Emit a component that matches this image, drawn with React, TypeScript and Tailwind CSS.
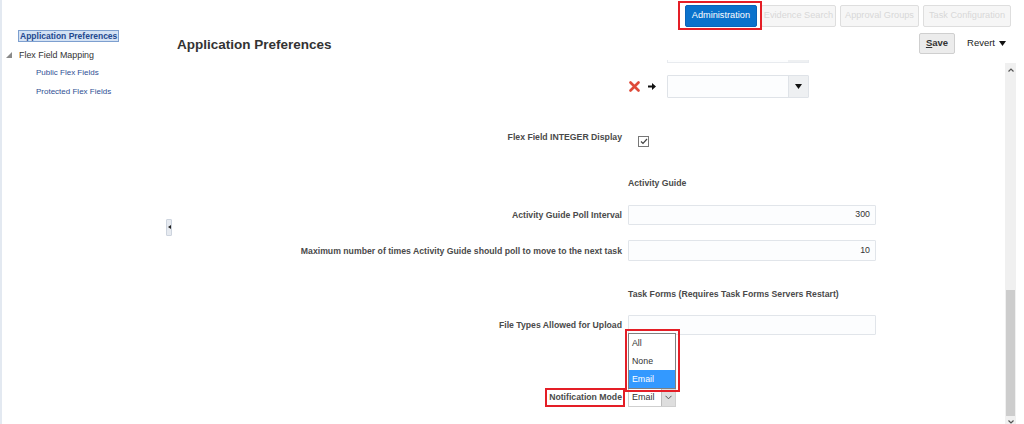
import React from "react";

const font = "font-['Liberation_Sans',Arial,sans-serif]";

function Label({ children }: { children: React.ReactNode }) {
  return (
    <div className="w-[450px] shrink-0 text-right text-[8.7px] font-bold text-[#4a4a4a] leading-[14px]">
      {children}
    </div>
  );
}

function TextInput({ value, w = "w-[248px]", h = "h-[20px]" }: { value?: string; w?: string; h?: string }) {
  return (
    <div
      className={`${w} ${h} border border-[#e1e5ea] bg-[#fcfdfe] rounded-[1px] flex items-center justify-end pr-[5px] text-[8.8px] text-[#333]`}
    >
      {value}
    </div>
  );
}

function DropInput() {
  return (
    <div className="w-[142px] h-[23px] border border-[#dfe3e8] bg-[#fcfdfe] rounded-[1px] flex">
      <div className="flex-1" />
      <div className="w-[20px] h-full bg-[#eef0f2] border-l border-[#dfe3e8] flex items-center justify-center">
        <svg width="7" height="5" viewBox="0 0 7 5">
          <path d="M0 0 H7 L3.5 5 Z" fill="#111" />
        </svg>
      </div>
    </div>
  );
}

export default function App() {
  return (
    <div className={`${font} w-[1024px] h-[424px] overflow-hidden bg-white flex flex-col border-l-2 border-[#e3e9f1] relative`}>
      {/* Tabs row */}
      <div className="h-[30px] shrink-0 flex items-start justify-end pr-[13px] pt-[5px] gap-[4px]">
        <div className="relative">
          <div className="h-[22px] px-[6px] flex items-center bg-[#0a72cc] border border-[#0a64b8] rounded-[2px] text-white text-[9.2px]">
            Administration
          </div>
          <span className="absolute -left-[7px] -right-[5px] -top-[4px] -bottom-[3px] border-2 border-[#e41e26] pointer-events-none" />
        </div>
        <div className="h-[22px] w-[75px] flex items-center justify-center bg-[#f6f6f6] border border-[#dedede] rounded-[2px] text-[#d8d8d8] text-[9.2px]">
          Evidence Search
        </div>
        <div className="h-[22px] w-[79px] flex items-center justify-center bg-[#f6f6f6] border border-[#dedede] rounded-[2px] text-[#d8d8d8] text-[9.2px]">
          Approval Groups
        </div>
        <div className="h-[22px] w-[88px] flex items-center justify-center bg-[#f6f6f6] border border-[#dedede] rounded-[2px] text-[#d8d8d8] text-[9.2px]">
          Task Configuration
        </div>
      </div>

      <div className="flex-1 flex min-h-0">
        {/* Left nav */}
        <div className="w-[161px] shrink-0 pl-[16px] flex flex-col items-start">
          <div className="h-[12px] leading-[10px] px-[1px] bg-[#d4e2f4] border border-[#7d9fcf] text-[8.5px] font-bold text-[#23488f]">
            Application Preferences
          </div>
          <div className="flex items-center mt-[7px] -ml-[12px] h-[12px] leading-[12px]">
            <svg width="6" height="6" viewBox="0 0 6 6" className="mr-[7px]">
              <path d="M6 0 V6 H0 Z" fill="#8a8a8a" />
            </svg>
            <span className="text-[8.9px] text-[#333]">Flex Field Mapping</span>
          </div>
          <div className="ml-[18px] mt-[6px] h-[12px] text-[8px] text-[#2f4f94] leading-[12px]">Public Flex Fields</div>
          <div className="ml-[18px] mt-[7px] h-[12px] text-[8px] text-[#2f4f94] leading-[12px]">Protected Flex Fields</div>
        </div>

        {/* Splitter */}
        <div className="w-[9px] shrink-0 flex items-center pl-[3px]">
          <div className="w-[6px] h-[17px] bg-[#e6eaf0] border border-[#cdd4de] rounded-[1px] flex items-center justify-center">
            <svg width="3" height="4" viewBox="0 0 3 4">
              <path d="M3 0 V4 L0 2 Z" fill="#222" />
            </svg>
          </div>
        </div>

        {/* Main */}
        <div className="flex-1 flex flex-col min-w-0">
          <div className="h-[30px] shrink-0 flex items-center pl-[5px] pr-[18px]">
            <div className="text-[13.5px] font-bold text-[#333]">Application Preferences</div>
            <div className="flex-1" />
            <div className="h-[21px] w-[36px] mt-[-3px] bg-[#ececec] border border-[#cfcfcf] rounded-[2px] flex items-center justify-center text-[9.5px] font-bold text-[#333]">
              <span className="underline">S</span>ave
            </div>
            <div className="ml-[12px] mt-[-3px] text-[9.5px] text-[#222] flex items-center gap-[4px]">
              Revert
              <svg width="7" height="5" viewBox="0 0 7 5">
                <path d="M0 0 H7 L3.5 5 Z" fill="#111" />
              </svg>
            </div>
          </div>

          <div className="flex-1 flex min-h-0 overflow-hidden">
            {/* Form */}
            <div className="w-[833px] shrink-0 flex flex-col">
              {/* partial row */}
              <div className="flex mt-[-17px]">
                <div className="w-[495px] shrink-0" />
                <div className="w-[142px] h-[20px] border border-[#e8ebef] bg-[#fcfdfe] flex">
                  <div className="flex-1" />
                  <div className="w-[20px] h-full bg-[#eef0f2]" />
                </div>
              </div>

              {/* X row */}
              <div className="flex items-center mt-[12px]">
                <div className="w-[456px] shrink-0" />
                <svg width="11" height="11" viewBox="0 0 11 11" className="ml-[1px]">
                  <path d="M1.5 1.5 L9.5 9.5 M9.5 1.5 L1.5 9.5" stroke="#df4b3a" strokeWidth="2.6" strokeLinecap="round" />
                </svg>
                <svg width="8" height="7" viewBox="0 0 8 7" className="ml-[8px]">
                  <path d="M0 2.5 H4 V0 L8 3.5 L4 7 V4.5 H0 Z" fill="#111" />
                </svg>
                <div className="ml-[11px]">
                  <DropInput />
                </div>
              </div>

              {/* checkbox row */}
              <div className="flex items-start gap-[6px] mt-[32px]">
                <Label>Flex Field INTEGER Display</Label>
                <div className="ml-[10px] mt-[6px] w-[11px] h-[11px] border border-[#777] bg-white flex items-center justify-center">
                  <svg width="8" height="7" viewBox="0 0 8 7">
                    <path d="M1 3.5 L3 5.5 L7 1" stroke="#444" strokeWidth="1.2" fill="none" />
                  </svg>
                </div>
              </div>

              {/* Activity Guide header */}
              <div className="flex gap-[6px] mt-[29px]">
                <div className="w-[450px] shrink-0" />
                <div className="text-[8.7px] font-bold text-[#4a4a4a] leading-[14px]">Activity Guide</div>
              </div>

              <div className="flex items-center gap-[6px] mt-[15px]">
                <Label>Activity Guide Poll Interval</Label>
                <TextInput value="300" />
              </div>

              <div className="flex items-center gap-[6px] mt-[15px]">
                <Label>Maximum number of times Activity Guide should poll to move to the next task</Label>
                <TextInput value="10" h="h-[21px]" />
              </div>

              <div className="flex gap-[6px] mt-[26px]">
                <div className="w-[450px] shrink-0" />
                <div className="text-[8.7px] font-bold text-[#4a4a4a] leading-[14px]">
                  Task Forms (Requires Task Forms Servers Restart)
                </div>
              </div>

              <div className="flex items-center gap-[6px] mt-[14px]">
                <Label>File Types Allowed for Upload</Label>
                <TextInput />
              </div>

              {/* Notification Mode */}
              <div className="flex items-stretch gap-[6px] mt-[53px] h-[19px]">
                <div className="w-[450px] shrink-0 flex justify-end">
                  <span className="relative h-full flex items-center text-[8.7px] font-bold text-[#4a4a4a]">
                    Notification Mode
                    <span className="absolute inset-y-0 -left-[4px] -right-[3px] border-2 border-[#e41e26]" />
                  </span>
                </div>
                <div className="relative w-[48px] h-full border border-[#cfcfcf] bg-white flex">
                  <div className="flex-1 flex items-center pl-[3px] text-[9px] text-[#333]">Email</div>
                  <div className="w-[14px] h-full bg-[#dedede] border-l border-[#bdbdbd] flex items-center justify-center">
                    <svg width="7" height="5" viewBox="0 0 7 5">
                      <path d="M0.5 0.8 L3.5 3.8 L6.5 0.8" stroke="#555" strokeWidth="1" fill="none" />
                    </svg>
                  </div>
                  {/* popup */}
                  <div className="absolute left-[-1px] bottom-full w-[48px] h-[56px] border border-[#808080] bg-white flex flex-col text-[8.8px] text-[#333]">
                    <div className="h-[18px] flex items-center pl-[3px] pt-[2px]">All</div>
                    <div className="h-[18px] flex items-center pl-[3px] pt-[2px]">None</div>
                    <div className="h-[18px] flex items-center pl-[3px] pt-[2px] bg-[#3399ff] text-white">Email</div>
                    <span className="absolute -left-[4px] -right-[5px] -top-[5px] -bottom-[4px] border-2 border-[#e41e26]" />
                  </div>
                </div>
              </div>
            </div>

            {/* Scrollbar */}
            <div className="w-[11px] shrink-0 mt-[3px] bg-[#f0f0f0] flex flex-col">
              <div className="h-[14px] flex items-center justify-center">
                <svg width="6" height="4" viewBox="0 0 6 4">
                  <path d="M0.5 3.5 L3 1 L5.5 3.5" stroke="#555" strokeWidth="1.2" fill="none" />
                </svg>
              </div>
              <div className="h-[213px]" />
              <div className="h-[126px] mx-[1px] bg-[#cdcdcd]" />
              <div className="h-[8px] flex items-end justify-center">
                <svg width="6" height="4" viewBox="0 0 6 4">
                  <path d="M0.5 0.5 L3 3 L5.5 0.5" stroke="#555" strokeWidth="1.2" fill="none" />
                </svg>
              </div>
            </div>
          </div>
        </div>
      </div>
    </div>
  );
}
